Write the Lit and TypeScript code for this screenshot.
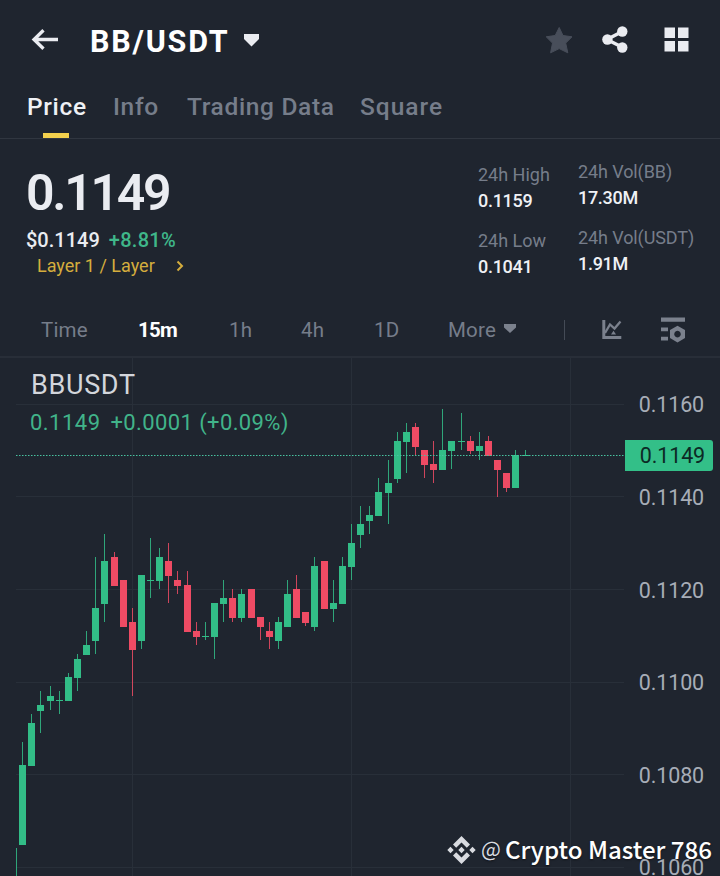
import { LitElement, html, css, svg } from "lit";
import { customElement } from "lit/decorators.js";
import { classMap } from "lit/directives/class-map.js";

// [x, bodyTop, bodyBottom, wickTop, wickBottom, rising]
type Candle = [number, number, number, number, number, 0 | 1];

const candles: Candle[] = [
  [16, 876, 876, 848, 876, 1],
  [22, 765, 845, 742, 845, 1], [31, 723, 766, 714, 766, 1], [40, 705, 711, 691, 733, 1],
  [50, 696, 701, 686, 710, 1], [59, 700, 701, 691, 714, 1], [68, 677, 701, 673, 701, 1],
  [77, 659, 678, 654, 691, 1], [86, 645, 655, 631, 655, 1], [95, 608, 641, 557, 654, 1],
  [104, 561, 604, 534, 622, 1], [114, 557, 586, 552, 586, 0], [123, 580, 627, 580, 627, 0],
  [132, 622, 650, 608, 696, 0], [141, 575, 641, 575, 649, 1], [150, 580, 581, 538, 598, 1],
  [159, 557, 581, 548, 589, 1], [168, 561, 576, 543, 603, 0], [177, 580, 586, 571, 594, 0],
  [187, 585, 632, 571, 632, 0], [196, 631, 637, 622, 645, 0], [205, 636, 637, 622, 640, 1],
  [214, 603, 637, 603, 659, 1], [223, 598, 604, 580, 622, 1], [232, 598, 618, 589, 622, 0],
  [241, 594, 618, 589, 622, 1], [251, 589, 618, 589, 618, 0], [260, 617, 627, 617, 640, 0],
  [269, 631, 637, 622, 649, 0], [278, 622, 641, 617, 649, 1], [287, 594, 627, 580, 627, 1],
  [296, 589, 618, 575, 618, 0], [305, 612, 623, 612, 626, 0], [314, 566, 627, 557, 631, 1],
  [324, 561, 609, 561, 609, 0], [333, 603, 609, 580, 622, 1], [342, 566, 604, 557, 604, 1],
  [351, 543, 567, 524, 580, 1], [360, 524, 535, 506, 548, 1], [369, 515, 521, 506, 534, 1],
  [378, 492, 516, 478, 516, 1], [388, 483, 493, 460, 524, 1], [397, 441, 479, 432, 483, 1],
  [406, 432, 442, 423, 473, 1], [415, 427, 447, 423, 455, 0], [424, 450, 465, 450, 478, 0],
  [433, 464, 470, 441, 483, 0], [442, 450, 470, 409, 470, 1], [451, 441, 451, 441, 469, 1],
  [461, 441, 442, 413, 450, 1], [470, 441, 451, 436, 454, 0], [479, 446, 451, 432, 460, 1],
  [488, 441, 456, 436, 456, 0], [497, 460, 470, 460, 497, 0], [506, 473, 488, 473, 492, 0],
  [515, 455, 488, 450, 488, 1], [525, 455, 456, 450, 456, 1],
];

const ticks: [string, number][] = [
  ["0.1160", 404], ["0.1140", 496.4], ["0.1120", 589.4], ["0.1100", 682], ["0.1080", 774.4], ["0.1060", 867],
];

@customElement("price-chart")
class PriceChart extends LitElement {
  static styles = css`
    :host { display: block; height: 518px; }
    svg { display: block; font-family: Roboto, sans-serif; }
    .grid { fill: #282f39; }
    .up { fill: #32bd87; }
    .down { fill: #ee4b64; }
    .wick { opacity: .85; }
    .last { stroke: #48c2a0; stroke-width: 1; stroke-dasharray: 1.5 1.5; }
    .pair { fill: #d3d6dc; font-size: 27px; }
    .quote { fill: #41b48a; font-size: 22px; }
    .tick { fill: #a7adb7; font-size: 21.5px; }
    .tag { fill: #33bf88; }
    .tagText { fill: #0c2a25; font-size: 21.5px; }
  `;
  render() {
    return html`<svg width="720" height="518" viewBox="0 358 720 518">
      ${ticks.map(([, y]) => svg`<rect class="grid" x="16" y=${Math.floor(y)} width="608" height="1"></rect>`)}
      ${[132, 351, 570].map((x) => svg`<rect class="grid" x=${x} y="358" width="1" height="518"></rect>`)}
      ${candles.map(([x, bt, bb, wt, wb, up]) => svg`<g class=${up ? "up" : "down"}>
        <rect class="wick" x=${x} y=${wt} width="1" height=${wb - wt}></rect>
        <rect x=${x - 3} y=${bt} width="7" height=${bb - bt}></rect></g>`)}
      <line class="last" x1="16" x2="625" y1="455.5" y2="455.5"></line>
      <text class="pair" x="31" y="394" textLength="104">BBUSDT</text>
      <text class="quote" x="30" y="430" textLength="70">0.1149</text>
      <text class="quote" x="110.5" y="430" textLength="178">+0.0001 (+0.09%)</text>
      ${ticks.map(([t, y]) => svg`<text class="tick" x="638.7" y=${y + 8.3} textLength="65.5">${t}</text>`)}
      <path class="tag" d="M625 440h85a3 3 0 0 1 3 3v25a3 3 0 0 1-3 3h-85z"></path>
      <text class="tagText" x="639.7" y="463" textLength="65.5">0.1149</text>
    </svg>`;
  }
}

@customElement("app-root")
class AppRoot extends LitElement {
  static styles = css`
    :host {
      display: block; position: relative; width: 720px; height: 876px; overflow: hidden;
      background: #1f252f; color: #eaecf1; font-family: Roboto, "Liberation Sans", sans-serif;
      white-space: nowrap;
    }
    svg { display: block; flex: none; }
    header { display: flex; align-items: center; height: 82px; padding: 0 31px 2px 31px; box-sizing: border-box; }
    .title { margin-left: 30px; padding-top: 2px; font-size: 30.5px; font-weight: 700; letter-spacing: 1.8px; color: #fff; width: 151px; }
    .caret { margin-left: 2px; }
    .actions { display: flex; align-items: center; gap: 30px; margin-left: auto; }
    nav { display: grid; grid-template-columns: 86px 74px 173px 1fr; height: 56px; padding-left: 27px; border-bottom: 1px solid #303640; }
    .tab { position: relative; line-height: 49px; font-size: 24.5px; font-weight: 500; letter-spacing: .65px; color: #767d8a; }
    .tab:last-child { letter-spacing: 1px; }
    .tab.on { color: #eff1f5; }
    .tab.on::after { content: ""; position: absolute; left: 16px; top: 51px; width: 26px; height: 5px; background: #f3d04d; }
    .summary { display: grid; grid-template-columns: 451px 100px 1fr; height: 167px; padding-left: 27px; }
    .left { padding-top: 24px; }
    .price { line-height: 61px; font-size: 50px; font-weight: 600; letter-spacing: -2.3px; margin-left: -1px; }
    .sub { display: flex; gap: 9px; line-height: 33px; font-size: 20px; font-weight: 500; margin-left: -1px; }
    .gain { color: #3fb78a; letter-spacing: .3px; }
    .layer { display: flex; align-items: center; gap: 21px; padding-left: 10px; line-height: 20px; font-size: 18px; margin-top: -1px; color: #d4ad3d; }
    .stats { display: grid; grid-template-rows: 26px 40px 26px 26px; padding-top: 23px; line-height: 26px; font-size: 18px; align-content: start; }
    .stats.second { padding-top: 20px; letter-spacing: -.1px; }
    .k { color: #767d8a; }
    .v { font-weight: 500; font-size: 18px; letter-spacing: -.3px; color: #eff1f5; }
    .intervals { display: grid; grid-template-columns: 97px 91px 72px 73px 74px 116px 38px 58px 1fr; align-items: center; height: 52px; padding: 0 0 3px 41px; box-sizing: border-box; border-bottom: 2px solid #282e38; color: #767d8a; font-size: 20.5px; letter-spacing: .2px; }
    .intervals .on { color: #fff; font-weight: 700; letter-spacing: -.8px; }
    .more { display: flex; align-items: center; gap: 8px; }
    .more svg { margin-top: -2px; }
    .rule { width: 1px; height: 20px; background: #444b56; }
    .mark { position: absolute; left: 447px; top: 831px; display: flex; align-items: center; height: 35px; line-height: 35px; font-family: "Noto Sans CJK SC", sans-serif; font-size: 24.1px; font-weight: 500; color: #fff; text-shadow: 0 1px 2px #0008; }
    .mark svg { margin-top: 2px; }
    .at { margin: 0 4px 0 5px; font-size: 21px; font-weight: 400; color: #d9dbe0; }
  `;
  render() {
    const tabs = ["Price", "Info", "Trading Data", "Square"];
    const spans = ["Time", "15m", "1h", "4h", "1D"];
    return html`
      <header>
        <svg width="29" height="28" viewBox="31 26 29 28"><path d="M43.500 30.200 34 39.500l9.500 9.300M34 39.500h24" fill="none" stroke="#eaecf1" stroke-width="3.300"/></svg>
        <span class="title">BB/USDT</span>
        <svg class="caret" width="17" height="14" viewBox="0 0 17 14"><path d="M1 1h15v5L8.500 13.500 1 6z" fill="#eaecf1"/></svg>
        <div class="actions">
          <svg width="27" height="28" viewBox="545 26 27 28"><path d="M559.200 27.500l3.800 8 9 1.300-6.300 6.300 2.100 9.700-8.600-4.200-8.600 4.200 1.900-9.700-6.300-6.300 9-1.300z" fill="#484e5a" stroke="#484e5a" stroke-linejoin="round"/></svg>
          <svg width="26" height="28" viewBox="602 26 26 28"><path d="M622.300 31.500 607 39.500l15.300 7.800" fill="none" stroke="#eaecf1" stroke-width="3.500"/><g fill="#eaecf1"><circle cx="622.300" cy="31.500" r="5.200"/><circle cx="607.400" cy="39.500" r="5.200"/><circle cx="622.300" cy="47.500" r="5.200"/></g></svg>
          <svg width="31" height="28" viewBox="658 26 31 28"><path d="M664.500 27.500h10.500v10.500h-10.500zM678 27.500h10.500v10.500h-10.500zM664.500 41h10.500v10.500h-10.500zM678 41h10.500v10.500h-10.500z" fill="#eaecf1"/></svg>
        </div>
      </header>
      <nav>${tabs.map((t, i) => html`<span class=${classMap({ tab: true, on: i === 0 })}>${t}</span>`)}</nav>
      <section class="summary">
        <div class="left">
          <div class="price">0.1149</div>
          <div class="sub"><span>$0.1149</span><span class="gain">+8.81%</span></div>
          <div class="layer"><span>Layer 1 / Layer</span>
            <svg width="8" height="12" viewBox="0 0 8 12"><path d="M1.500 1.500 6 6l-4.500 4.500" fill="none" stroke="#d4ad3d" stroke-width="2"/></svg></div>
        </div>
        <div class="stats"><span class="k">24h High</span><span class="v">0.1159</span><span class="k">24h Low</span><span class="v">0.1041</span></div>
        <div class="stats second"><span class="k">24h Vol(BB)</span><span class="v">17.30M</span><span class="k">24h Vol(USDT)</span><span class="v">1.91M</span></div>
      </section>
      <div class="intervals">
        ${spans.map((t) => html`<span class=${classMap({ on: t === "15m" })}>${t}</span>`)}
        <span class="more">More <svg width="12" height="10" viewBox="0 0 12 10"><path d="M0 0h12v3.500L6 9 0 3.500z" fill="#7b818d"/></svg></span>
        <i class="rule"></i>
        <svg width="20" height="20" viewBox="602.500 319 20 20"><path d="M604.300 319v17.500h17.500" fill="none" stroke="#7b818d" stroke-width="3"/><path d="M605.500 332l5-8.500 4.500 4 6-7" fill="none" stroke="#7b818d" stroke-width="2.300"/><path d="M611.500 333.500l2.500-3.800 2.500 3.800z" fill="#7b818d"/></svg>
        <svg width="26" height="27" viewBox="660 315 26 27"><path d="M661 316.500h24v4.300h-24zM661 326.500h7v3.700h-7zM661 335.700h7v3.700h-7z" fill="#7b818d"/><path d="M677.500 324.800l7.500 4.200v8l-7.500 4.500-7.500-4.500v-8zM677.500 329.800a3.300 3.300 0 1 0 .01 0z" fill="#7b818d" fill-rule="evenodd"/></svg>
      </div>
      <price-chart></price-chart>
      <div class="mark">
        <svg width="29" height="30" viewBox="-14.500 -15 29 30"><path d="M0-14 8.500-5.500 5.300-2.300 0-7.600-5.300-2.300-8.500-5.500zM0 14 8.500 5.500 5.300 2.300 0 7.600-5.300 2.300-8.500 5.500zM0-3.200 3.200 0 0 3.200-3.200 0zM-11-3.200-7.800 0-11 3.200-14.200 0zM11-3.200 14.200 0 11 3.200 7.800 0z" fill="#d9dbe0"/></svg>
        <span class="at">@</span><span>Crypto Master 786</span>
      </div>`;
  }
}
